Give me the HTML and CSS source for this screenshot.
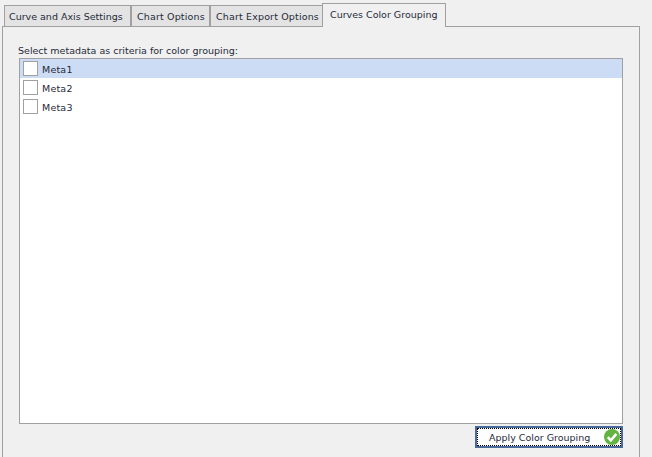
FILE: index.html
```html
<!DOCTYPE html>
<html lang="en">
<head>
  <meta charset="UTF-8" />
  <title>Curves Color Grouping</title>
  <link rel="stylesheet" href="styles.css">
</head>
<body>
  <div class="tabs">
    <div class="tab tab-axis">Curve and Axis Settings</div>
    <div class="tab tab-options">Chart Options</div>
    <div class="tab tab-export">Chart Export Options</div>
    <div class="tab active">Curves Color Grouping</div>
  </div>
  <div class="panel">
    <div class="caption">Select metadata as criteria for color grouping:</div>
    <div class="list">
      <div class="row selected"><span class="check"></span><span class="row-label">Meta1</span></div>
      <div class="row"><span class="check"></span><span class="row-label">Meta2</span></div>
      <div class="row"><span class="check"></span><span class="row-label">Meta3</span></div>
    </div>
    <div class="actions">
      <button class="apply-button">
        <span class="apply-label">Apply Color Grouping</span>
        <svg class="ok-icon" width="16" height="16" viewBox="0 0 16 16">
          <circle cx="8" cy="8" r="8" fill="#62b340"/>
          <path d="M3.8 8.2 L6.8 11.4 L12.4 4.8" fill="none" stroke="#fff" stroke-width="2.6"/>
        </svg>
      </button>
    </div>
  </div>
</body>
</html>
```

FILE: styles.css
```css
html, body {
  height: 100%;
}

body {
  margin: 0;
  background-color: #f0f0f0;
  font-family: "DejaVu Sans", Tahoma, sans-serif;
  font-size: 9.5px;
  color: #1f2a3a;
  overflow: hidden;
}

.tabs {
  display: flex;
  align-items: flex-end;
  height: 26px;
  padding-left: 4px;
}

.tab {
  height: 21px;
  line-height: 21px;
  padding-left: 5px;
  box-sizing: border-box;
  background-color: #e3e3e3;
  border: 1px solid #a0a0a0;
  border-bottom: none;
  white-space: nowrap;
}

.tab-axis {
  width: 127px;
  padding-left: 4px;
}

.tab-options {
  width: 79px;
  letter-spacing: 0.15px;
}

.tab-export {
  width: 113px;
  letter-spacing: 0.15px;
}

.tab.active {
  width: 124px;
  height: 24px;
  line-height: 21px;
  padding-left: 7px;
  margin-left: -1px;
  margin-bottom: -1px;
  background-color: #f0f0f0;
  position: relative;
}

.panel {
  width: 638px;
  height: 431px;
  margin-left: 2px;
  padding: 17px 16px 0 16px;
  box-sizing: border-box;
  border: 1px solid #a0a0a0;
  border-bottom: none;
}

.caption {
  height: 14px;
  line-height: 13px;
  margin-left: -1px;
}

.list {
  height: 366px;
  box-sizing: border-box;
  background-color: #fff;
  border: 1px solid #a0a0a0;
}

.row {
  display: flex;
  align-items: center;
  height: 19px;
  padding-left: 3px;
}

.row.selected {
  background-color: #cddcf5;
}

.row-label {
  padding-top: 1px;
  letter-spacing: 0.2px;
}

.check {
  width: 13px;
  height: 13px;
  margin-right: 4px;
  background-color: #fff;
  border: 1px solid #a0a0a0;
}

.actions {
  display: flex;
  justify-content: flex-end;
  padding-top: 2px;
}

.apply-button {
  display: flex;
  align-items: center;
  justify-content: space-between;
  width: 148px;
  height: 22px;
  padding: 0 1px 0 12px;
  background-color: #fff;
  border: 2px solid #4a6a9c;
  outline: 1px dotted #000;
  outline-offset: -3px;
  font: inherit;
  color: inherit;
}
```
